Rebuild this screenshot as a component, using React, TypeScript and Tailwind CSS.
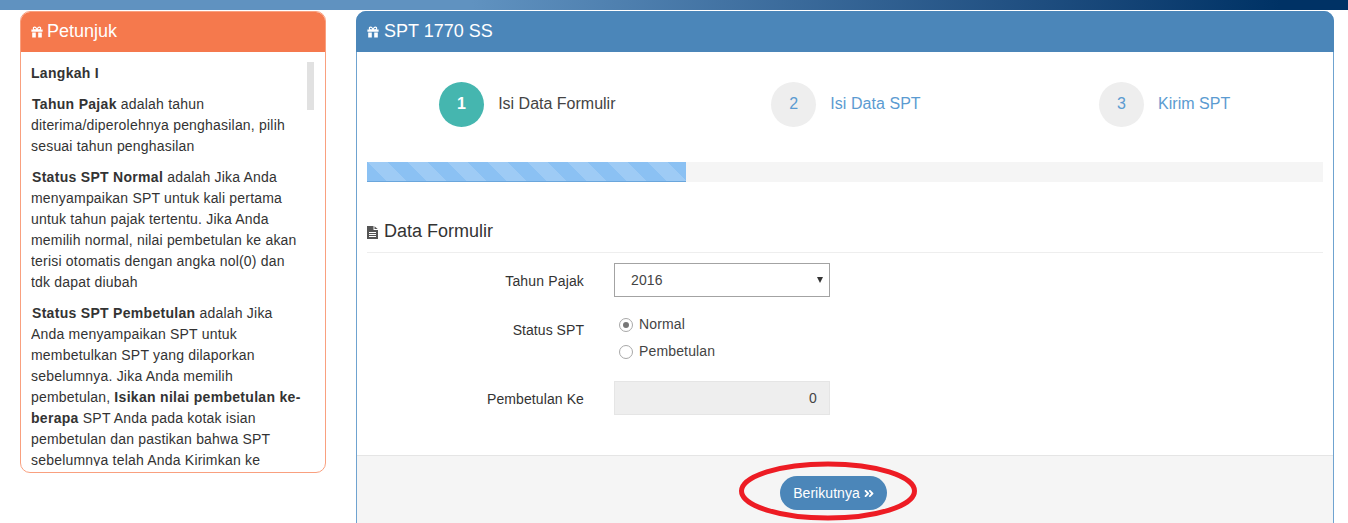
import { FaAngleDoubleRight } from "react-icons/fa";

function GiftIcon() {
  return (
    <svg className="h-[12px] w-[12px] shrink-0" viewBox="0 0 12 12" fill="currentColor">
      <path d="M3.6 0.6C2.4 0.6 1.8 1.4 1.8 2.2c0 .5.2.9.5 1.2H0.4v2.4h11.2V3.4H9.7c.3-.3.5-.7.5-1.2C10.2 1.4 9.6.6 8.4.6 7.3.6 6.4 1.5 6 2.4 5.6 1.5 4.7.6 3.6.6zm.1 1.2c.7 0 1.3.8 1.5 1.5H3.7c-.5 0-.8-.3-.8-.8s.3-.7.8-.7zm4.6 0c.5 0 .8.3.8.7s-.3.8-.8.8H6.8c.2-.7.8-1.5 1.5-1.5z" />
      <path d="M1.2 6.6h3.6v4.9H1.2zM7.2 6.6h3.6v4.9H7.2z" />
    </svg>
  );
}

function DocIcon() {
  return (
    <svg className="mt-[8px] h-[13px] w-[11px] shrink-0" viewBox="0 0 11 13">
      <path d="M0 0h6.5v4H11v9H0z" fill="#555555" />
      <path d="M7.5 0.3 10.7 3H7.5z" fill="#555555" />
      <path d="M2 6h7v1H2zM2 8h7v1H2zM2 10h7v1H2z" fill="#ffffff" />
    </svg>
  );
}

function Step({ n, label, active }: { n: number; label: string; active?: boolean }) {
  return (
    <div className="flex items-center justify-center gap-[14px]">
      <div
        className={
          active
            ? "flex h-[45px] w-[45px] items-center justify-center rounded-full bg-[#45b6af] text-[16px] font-bold text-white"
            : "flex h-[45px] w-[45px] items-center justify-center rounded-full bg-[#eeeeee] text-[16px] text-[#5b9bd1]"
        }
      >
        <span className="-mt-[2px]">{n}</span>
      </div>
      <span className={active ? "-mt-[2px] text-[16px] tracking-normal text-[#444444]" : "-mt-[2px] text-[16px] tracking-[0.05px] text-[#5b9bd1]"}>
        {label}
      </span>
    </div>
  );
}

function Radio({ label, checked }: { label: string; checked?: boolean }) {
  return (
    <div className="flex h-[27px] items-center gap-[6px]">
      <span className="flex h-[14px] w-[14px] items-center justify-center rounded-full border border-[#a8a8a8] bg-white">
        {checked && <span className="h-[6px] w-[6px] rounded-full bg-[#777777]" />}
      </span>
      <span>{label}</span>
    </div>
  );
}

export default function App() {
  return (
    <div className="h-[523px] overflow-hidden bg-white font-['Liberation_Sans',Arial,sans-serif] text-[14px] leading-[21px] tracking-[0.15px] text-[#333333]">
      <div className="h-[10px] bg-gradient-to-r from-[#6092c0] from-[35%] to-[#003265] to-[95%]" />
      <div className="mt-px flex items-start gap-[30px] pl-[20px]">
        <aside className="h-[462px] w-[306px] shrink-0 overflow-hidden rounded-[10px] border border-[#f9a07f] bg-white">
          <header className="-mx-px -mt-px flex h-[41px] items-center gap-[4px] bg-[#f5794d] pl-[11px] text-[18px] tracking-normal text-white">
            <GiftIcon />
            <span>Petunjuk</span>
          </header>
          <div className="relative h-[410px] px-[10px] pt-[10px]">
            <div className="h-[404px] w-[272px] overflow-hidden pt-px tracking-[0.2px]">
              <p className="mb-[10px] font-bold tracking-[0.3px]">Langkah I</p>
              <p className="mb-[10px]">
                <b className="ml-px tracking-[0.3px]">Tahun Pajak</b> adalah tahun diterima/diperolehnya penghasilan, pilih sesuai tahun penghasilan
              </p>
              <p className="mb-[10px]">
                <b className="ml-px tracking-[0.3px]">Status SPT Normal</b> adalah Jika Anda menyampaikan SPT untuk kali pertama untuk tahun pajak tertentu. Jika Anda memilih normal, nilai pembetulan ke akan terisi otomatis dengan angka nol(0) dan tdk dapat diubah
              </p>
              <p>
                <b className="ml-px tracking-[0.3px]">Status SPT Pembetulan</b> adalah Jika Anda menyampaikan SPT untuk membetulkan SPT yang dilaporkan sebelumnya. Jika Anda memilih pembetulan, <b className="tracking-[0.3px]">Isikan nilai pembetulan ke-berapa</b> SPT Anda pada kotak isian pembetulan dan pastikan bahwa SPT sebelumnya telah Anda Kirimkan ke
              </p>
            </div>
            <div className="absolute right-[11px] top-[10px] h-[48px] w-[7px] bg-[#e1e1e1]" />
          </div>
        </aside>

        <main className="h-[600px] w-[978px] shrink-0 rounded-t-[10px] border border-[#6fa3d0] bg-white">
          <header className="-mx-px -mt-px flex h-[41px] items-center gap-[5px] rounded-t-[10px] bg-[#4b86b9] pl-[11px] text-[18px] tracking-normal text-white">
            <GiftIcon />
            <span>SPT 1770 SS</span>
          </header>
          <div className="h-[403px] px-[10px] pt-[30px]">
            <div className="-mr-px ml-px grid grid-cols-3">
              <Step n={1} label="Isi Data Formulir" active />
              <Step n={2} label="Isi Data SPT" />
              <Step n={3} label="Kirim SPT" />
            </div>
            <div className="mt-[35px] h-[20px] bg-[#f5f5f5]">
              <div className="h-[20px] w-[319px] border-b border-[#6aa6dc] bg-[repeating-linear-gradient(45deg,#8bc1f3_0,#8bc1f3_14.14px,#9ecbf5_14.14px,#9ecbf5_28.28px)]" />
            </div>
            <div className="mt-[36px] flex h-[35px] items-start gap-[6px] border-b border-[#eeeeee] text-[18px] leading-[26px] tracking-normal text-[#333333]">
              <DocIcon />
              <span>Data Formulir</span>
            </div>
            <div className="mt-[10px] flex h-[34px] items-center">
              <label className="mt-[2px] w-[217px] text-right">Tahun Pajak</label>
              <div className="ml-[30px] flex h-[34px] w-[216px] items-center justify-between border border-[#a3a3a3] pl-[16px] pr-[6px] text-[#444444]">
                <span>2016</span>
                <span className="h-0 w-0 border-x-[3.5px] border-t-[6px] border-x-transparent border-t-[#333333]" />
              </div>
            </div>
            <div className="mt-[14px] flex items-start">
              <label className="mt-[9px] w-[217px] text-right tracking-[0.05px]">Status SPT</label>
              <div className="ml-[35px] text-[#444444]">
                <Radio label="Normal" checked />
                <Radio label="Pembetulan" />
              </div>
            </div>
            <div className="mt-[16px] flex h-[34px] items-center">
              <label className="mt-[2px] w-[217px] text-right tracking-[0.1px]">Pembetulan Ke</label>
              <div className="ml-[30px] flex h-[34px] w-[216px] items-center justify-end border border-[#e5e5e5] bg-[#eeeeee] pr-[12px] text-[#444444]">
                0
              </div>
            </div>
          </div>
          <footer className="relative flex h-[120px] border-t border-[#e5e5e5] bg-[#f5f5f5] pt-[20px]">
            <button className="ml-[423px] flex h-[34px] w-[107px] items-center justify-center gap-[4px] rounded-[17px] bg-[#4b86b9] tracking-[0.05px] text-white">
              Berikutnya
              <FaAngleDoubleRight className="h-[13px] w-[10px]" />
            </button>
            <svg className="absolute left-[381px] top-[5px]" width="180" height="62" viewBox="0 0 180 62">
              <ellipse cx="90" cy="30" rx="86.5" ry="27" fill="none" stroke="#ed1c24" strokeWidth="5" />
            </svg>
          </footer>
        </main>
      </div>
    </div>
  );
}
